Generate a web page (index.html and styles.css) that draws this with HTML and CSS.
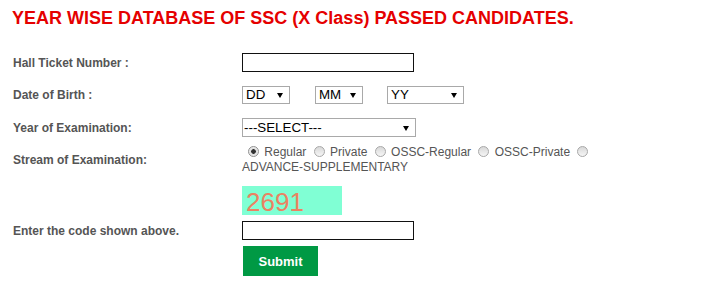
FILE: index.html
```html
<!DOCTYPE html>
<html>
<head>
<meta charset="utf-8">
<link rel="stylesheet" href="styles.css">
</head>
<body>
<div class="page">
  <h1 class="title">YEAR WISE DATABASE OF SSC (X Class) PASSED CANDIDATES.</h1>
  <form class="form">
    <div class="row row-1">
      <label class="label">Hall Ticket Number :</label>
      <input class="text-input" type="text">
    </div>
    <div class="row row-2">
      <label class="label">Date of Birth :</label>
      <div class="dob">
        <span class="sel sel-dd"><select><option>DD</option></select></span>
        <span class="sel sel-mm"><select><option>MM</option></select></span>
        <span class="sel sel-yy"><select><option>YY</option></select></span>
      </div>
    </div>
    <div class="row row-3">
      <label class="label">Year of Examination:</label>
      <span class="sel sel-year"><select><option>---SELECT---</option></select></span>
    </div>
    <div class="row row-4">
      <label class="label">Stream of Examination:</label>
      <div class="radios"><input class="rb rb-first" type="radio" name="s" checked> Regular <input class="rb" type="radio" name="s"> Private <input class="rb" type="radio" name="s"> OSSC-Regular <input class="rb" type="radio" name="s"> OSSC-Private <input class="rb" type="radio" name="s"> ADVANCE-SUPPLEMENTARY</div>
    </div>
    <div class="row row-5">
      <span class="label"></span>
      <div class="captcha">2691</div>
    </div>
    <div class="row row-6">
      <label class="label">Enter the code shown above.</label>
      <input class="text-input" type="text">
    </div>
    <div class="row row-7">
      <span class="label"></span>
      <button class="submit" type="button">Submit</button>
    </div>
  </form>
</div>
</body>
</html>
```
FILE: styles.css
```css
* { box-sizing: border-box; }
html, body { margin: 0; padding: 0; background: #fff; }
body { font-family: "Liberation Sans", Arial, sans-serif; }
.page { padding: 8px 12px 0 12px; }
.title {
  margin: 0;
  font-size: 18px;
  line-height: 20px;
  font-weight: bold;
  color: #e50000;
}
.form { display: flex; flex-direction: column; }
.row { display: flex; align-items: center; }
.row-1 { margin-top: 25px; }
.row-2 { margin-top: 14px; }
.row-3 { margin-top: 14px; }
.row-4 { margin-top: 8px; }
.row-5 { margin-top: 11px; }
.row-6 { margin-top: 6px; }
.row-7 { margin-top: 6px; }
.label {
  width: 230px;
  flex: none;
  padding-left: 1px;
  font-size: 12px;
  font-weight: bold;
  color: #555;
}
.text-input {
  width: 172px;
  height: 19px;
  border: 1px solid #111;
  padding: 0 2px;
  margin: 0;
  font: 13px "Liberation Sans", Arial, sans-serif;
  background: #fff;
}
.dob { display: flex; align-items: center; }
.sel { position: relative; display: inline-block; }
.sel select {
  -webkit-appearance: none;
  appearance: none;
  display: block;
  height: 18px;
  margin: 0;
  padding: 0 0 0 3px;
  border: 1px solid #a9a9a9;
  border-radius: 0;
  background: #fff;
  color: #000;
  font: 13.33px "Liberation Sans", Arial, sans-serif;
  line-height: 16px;
  outline: none;
}
.sel::after {
  content: "";
  position: absolute;
  right: 7px;
  top: 50%;
  margin-top: -2px;
  border-left: 3px solid transparent;
  border-right: 3px solid transparent;
  border-top: 5px solid #000;
}
.sel-dd select { width: 48px; }
.sel-mm { margin-left: 25px; }
.sel-mm select { width: 48px; }
.sel-yy { margin-left: 24px; }
.sel-yy select { width: 77px; }
.sel-year select { width: 174px; height: 19px; padding-left: 1px; }
.radios {
  width: 350px;
  font-size: 12px;
  line-height: 15px;
  color: #555;
}
.rb {
  -webkit-appearance: none;
  appearance: none;
  display: inline-block;
  width: 11px;
  height: 11px;
  margin: 0 2px 0 4px;
  border: 1px solid #a8a8a8;
  border-radius: 50%;
  background: linear-gradient(#d8d8d8, #f6f6f6);
  vertical-align: middle;
  position: relative;
  top: -1px;
}
.rb:checked {
  background: radial-gradient(circle, #333 0, #333 2px, #dcdcdc 2.6px, #f2f2f2 5px);
  border-color: #909090;
}
.rb-first { margin-left: 6px; }
.captcha {
  width: 100px;
  height: 29px;
  padding: 3px 0 0 4px;
  background: #80ffd4;
  color: #ec8262;
  font-size: 26px;
  line-height: 26px;
}
.submit {
  width: 75px;
  height: 30px;
  margin: 0 0 0 1px;
  padding: 0;
  border: 0;
  background: #009944;
  color: #fff;
  font: bold 13px "Liberation Sans", Arial, sans-serif;
  cursor: pointer;
}
```
